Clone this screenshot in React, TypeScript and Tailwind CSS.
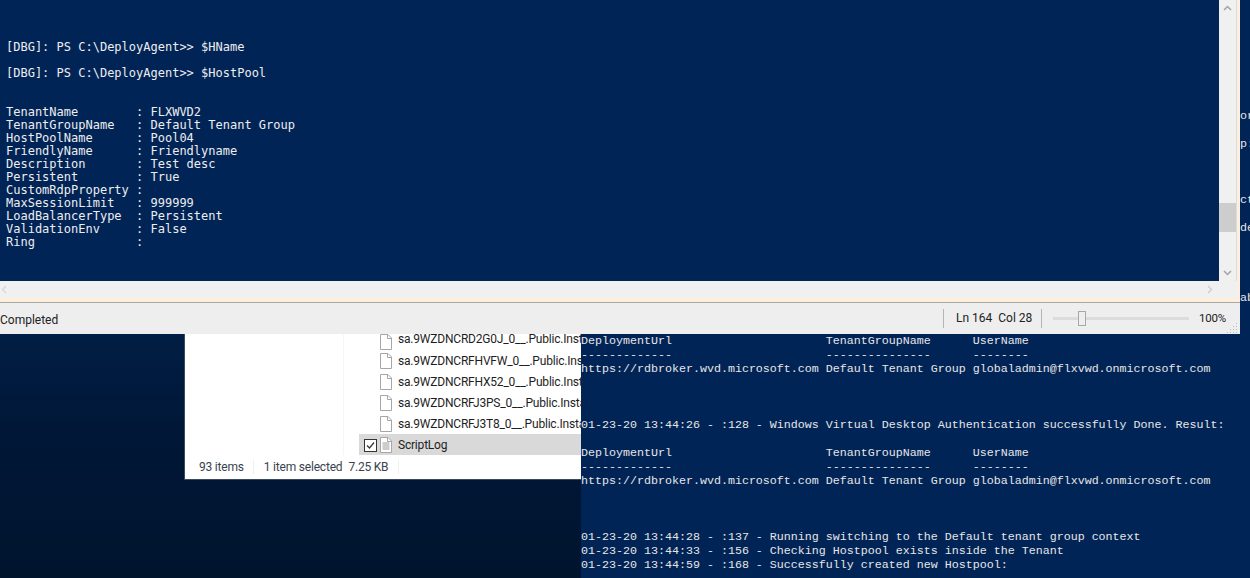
const hostPool: [string, string][] = [
  ["TenantName", "FLXWVD2"],
  ["TenantGroupName", "Default Tenant Group"],
  ["HostPoolName", "Pool04"],
  ["FriendlyName", "Friendlyname"],
  ["Description", "Test desc"],
  ["Persistent", "True"],
  ["CustomRdpProperty", ""],
  ["MaxSessionLimit", "999999"],
  ["LoadBalancerType", "Persistent"],
  ["ValidationEnv", "False"],
  ["Ring", ""],
];

const files = [
  "sa.9WZDNCRFHVFW_0__.Public.Ins",
  "sa.9WZDNCRFHX52_0__.Public.Inst",
  "sa.9WZDNCRFJ3PS_0__.Public.Insta",
  "sa.9WZDNCRFJ3T8_0__.Public.Insta",
];

function FileIcon({ lines }: { lines?: boolean }) {
  return (
    <svg width="12" height="16" viewBox="0 0 12 16" className="shrink-0">
      <path d="M.5.5h7.5l3.5 3.5v11.500H.5z" fill="#fff" stroke="#a6a6a6" />
      <path d="M7.500.5v4h4" fill="none" stroke="#a6a6a6" />
      {lines && <path d="M2.500 6h7M2.500 8h7M2.500 10h7M2.500 12h7" stroke="#9a9a9a" />}
    </svg>
  );
}

function OutputTable() {
  return (
    <div className="whitespace-pre">
      <div className="h-[14px]">{"DeploymentUrl                      TenantGroupName      UserName"}</div>
      <div className="h-[14px]">{"-------------                      ---------------      --------"}</div>
      <div className="h-[14px]">{"https://rdbroker.wvd.microsoft.com Default Tenant Group globaladmin@flxvwd.onmicrosoft.com"}</div>
    </div>
  );
}

function Grip() {
  return (
    <svg width="11" height="11" viewBox="0 0 11 11" className="absolute bottom-[1px] right-[2px]">
      <path d="M9 1h1v1H9zM6 4h1v1H6zM9 4h1v1H9zM3 7h1v1H3zM6 7h1v1H6zM9 7h1v1H9zM0 10h1v1H0zM3 10h1v1H3zM6 10h1v1H6zM9 10h1v1H9z" fill="#b5bcc6" />
    </svg>
  );
}

export default function App() {
  return (
    <div className="relative h-[578px] w-[1250px] overflow-hidden bg-[#012456]">
      {/* desktop wallpaper */}
      <div className="absolute left-0 top-[334px] h-[244px] w-[581px] bg-[linear-gradient(180deg,#011e44_0%,#001737_40%,#00142e_100%)]" />

      {/* background console */}
      <div className="absolute left-[581px] top-[334px] h-[244px] w-[669px] bg-[#012456] font-['Liberation_Mono',monospace] text-[11.67px] leading-[14px] text-[#e6e6e6]">
        <OutputTable />
        <div className="mt-[42px] h-[14px] whitespace-pre">01-23-20 13:44:26 - :128 - Windows Virtual Desktop Authentication successfully Done. Result:</div>
        <div className="mt-[14px]"><OutputTable /></div>
        <div className="mt-[42px] whitespace-pre">
          <div className="h-[14px]">01-23-20 13:44:28 - :137 - Running switching to the Default tenant group context</div>
          <div className="h-[14px]">01-23-20 13:44:33 - :156 - Checking Hostpool exists inside the Tenant</div>
          <div className="h-[14px]">01-23-20 13:44:59 - :168 - Successfully created new Hostpool:</div>
        </div>
      </div>

      {/* text of the background console, seen to the right of the top window */}
      <div className="absolute left-[1240px] top-0 h-[334px] w-[10px] overflow-hidden font-['Liberation_Mono',monospace] text-[11.67px] leading-[14px] text-[#e6e6e6]">
        <div className="absolute top-[109px]">or</div>
        <div className="absolute top-[137px]">p:</div>
        <div className="absolute top-[193px]">ct</div>
        <div className="absolute top-[221px]">de</div>
        <div className="absolute top-[291px]">ab</div>
      </div>

      {/* file explorer window */}
      <div className="absolute left-[184px] top-[334px] flex h-[146px] w-[397px] flex-col overflow-hidden border-b border-l border-[#3d4a5c] bg-white font-['Roboto',sans-serif] text-[12px] tracking-[-0.2px] text-[#1e1e1e]">
        <div className="relative flex-1 overflow-hidden pl-[174px]">
          <div className="absolute left-[158px] top-0 h-[121px] w-px bg-[#f6f6f6]" />
          <div className="flex h-[16px] items-center gap-[6px] overflow-hidden whitespace-nowrap pl-[21px]">
            <FileIcon />
            <span className="relative top-[-3px]">sa.9WZDNCRD2G0J_0__.Public.Inst</span>
          </div>
          {files.map((f) => (
            <div key={f} className="flex h-[21px] items-center gap-[6px] overflow-hidden whitespace-nowrap pl-[21px]">
              <FileIcon />
              <span>{f}</span>
            </div>
          ))}
          <div className="flex h-[22px] items-center gap-[3px] bg-[#d9d9d9] pl-[5px]">
            <span className="flex h-[13px] w-[13px] items-center justify-center border border-[#333] bg-white">
              <svg width="11" height="11" viewBox="0 0 11 11">
                <path d="M2 5.500l2.500 2.500L9 2.500" fill="none" stroke="#333" strokeWidth="1.2" />
              </svg>
            </span>
            <FileIcon lines />
            <span className="ml-[3px]">ScriptLog</span>
          </div>
        </div>
        <div className="flex h-[24px] items-center whitespace-pre pl-[14px] text-[#3a4250]">
          <span>93 items</span>
          <span className="ml-[9px] h-[14px] w-px bg-[#f0f0f0]" />
          <span className="ml-[10px]">1 item selected</span>
          <span className="ml-[6px]">7.25 KB</span>
          <span className="ml-[10px] h-[14px] w-px bg-[#f0f0f0]" />
        </div>
      </div>

      {/* PowerShell ISE window */}
      <div className="absolute left-0 top-0 flex h-[334px] w-[1240px] flex-col bg-[#f0f0f0]">
        <div className="flex h-[298px] shrink-0">
          <div className="flex w-[1237px] flex-col">
            <div className="flex h-[281px]">
              <div className="h-[281px] w-[1219px] bg-[#012456] pl-[6px] pt-[41px] font-['DejaVu_Sans_Mono',monospace] text-[12px] leading-[13px] text-[#eeedf0]">
                <div className="h-[26px] whitespace-pre">{"[DBG]: PS C:\\DeployAgent>> $HName"}</div>
                <div className="h-[26px] whitespace-pre">{"[DBG]: PS C:\\DeployAgent>> $HostPool"}</div>
                <div className="mt-[13px]">
                  {hostPool.map(([k, v]) => (
                    <div key={k} className="h-[13px] whitespace-pre">
                      {k.padEnd(18, " ") + ": " + v}
                    </div>
                  ))}
                </div>
              </div>
              <div className="relative flex w-[18px] flex-col items-center justify-between border-r border-[#dcdcdc] bg-[#f0f0f0] py-[5px]">
                <svg width="9" height="6" viewBox="0 0 9 6"><path d="M1 5l3.500-3.500L8 5" fill="none" stroke="#a3a3a3" strokeWidth="1.5" /></svg>
                <div className="absolute left-0 top-[203px] h-[29px] w-[17px] bg-[#cdcdcd]" />
                <svg width="9" height="6" viewBox="0 0 9 6"><path d="M1 1l3.500 3.500L8 1" fill="none" stroke="#a3a3a3" strokeWidth="1.5" /></svg>
              </div>
            </div>
            <div className="flex h-[17px] items-center justify-between bg-[#f0f0f0] pl-[1px] pr-[24px]">
              <svg width="6" height="9" viewBox="0 0 6 9"><path d="M5 1L1.500 4.500 5 8" fill="none" stroke="#dadada" strokeWidth="1.5" /></svg>
              <svg width="6" height="9" viewBox="0 0 6 9"><path d="M1 1l3.500 3.500L1 8" fill="none" stroke="#d0d0d0" strokeWidth="1.5" /></svg>
            </div>
          </div>
          <div className="w-[3px] bg-[#fdeedd]" />
        </div>
        <div className="h-[5px] shrink-0 border-b border-[#a8a8a8] bg-[#fdeedd]" />
        <div className="relative flex flex-1 items-center bg-[#eeeeee] pb-[1px] font-['Roboto',sans-serif] text-[12px] text-[#222]">
          <span className="relative top-[2px] flex-1">Completed</span>
          <span className="h-[19px] w-px bg-[#b4b4b4]" />
          <span className="ml-[12px] w-[74px] whitespace-pre">{"Ln 164  Col 28"}</span>
          <span className="ml-[11px] h-[19px] w-px bg-[#b4b4b4]" />
          <div className="relative ml-[11px] h-[3px] w-[136px] bg-[#dcdcdc]">
            <div className="absolute left-[25px] top-[-6px] h-[15px] w-[8px] border border-[#a8a8a8] bg-[#eeeeee]" />
          </div>
          <span className="relative top-[1px] ml-[10px] w-[41px] text-[11.500px] tracking-[-0.2px]">100%</span>
          <Grip />
        </div>
      </div>
    </div>
  );
}
